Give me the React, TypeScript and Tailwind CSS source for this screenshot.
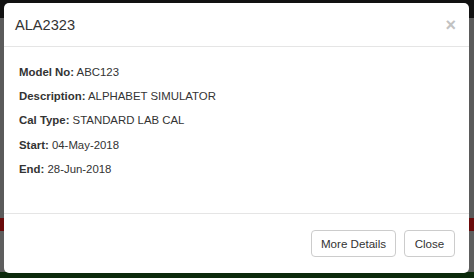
import React from 'react'

const rows = [
  { label: 'Model No:', value: 'ABC123' },
  { label: 'Description:', value: 'ALPHABET SIMULATOR' },
  { label: 'Cal Type:', value: 'STANDARD LAB CAL' },
  { label: 'Start:', value: '04-May-2018' },
  { label: 'End:', value: '28-Jun-2018' },
]

export default function App() {
  return (
    <div
      className="relative w-[474px] h-[278px] overflow-hidden bg-[#5b5b5b]"
      style={{ fontFamily: '"Liberation Sans", Arial, sans-serif' }}
    >
      {/* page behind the backdrop */}
      <div className="flex flex-col h-full">
        <div className="h-[18px] bg-[#121212]" />
        <div className="h-[200px] bg-[#5b5b5b]" />
        <div className="h-[13px] bg-[#6a0a0a]" />
        <div className="flex-1 bg-[#5e5e5e]" />
        <div className="h-[6px] bg-[#0c2a0c]" />
      </div>

      {/* modal */}
      <div className="absolute left-[4px] top-[3px] w-[465px] h-[270px] bg-white rounded-[5px] flex flex-col text-[#333]">
        <div className="flex items-center justify-between h-[44px] pl-[11px] pr-[13px] pt-[1px] border-b border-[#e5e5e5]">
          <span className="text-[14.6px] leading-none">ALA2323</span>
          <span className="text-[18px] leading-none font-bold text-[#c2c2c2]">×</span>
        </div>
        <div className="flex-1 flex flex-col pt-[18px] pl-[15px] gap-[10.2px] text-[11.4px] leading-[14px]">
          {rows.map((r) => (
            <div key={r.label}>
              <span className="font-bold">{r.label}</span> {r.value}
            </div>
          ))}
        </div>
        <div className="h-[60px] border-t border-[#e5e5e5] flex items-center justify-end gap-[8px] pr-[14px]">
          <button className="h-[27px] w-[85px] border border-[#ccc] rounded-[4px] bg-white text-[11.6px] text-[#333]">
            More Details
          </button>
          <button className="h-[27px] w-[51px] border border-[#ccc] rounded-[4px] bg-white text-[11.6px] text-[#333]">
            Close
          </button>
        </div>
      </div>
    </div>
  )
}
